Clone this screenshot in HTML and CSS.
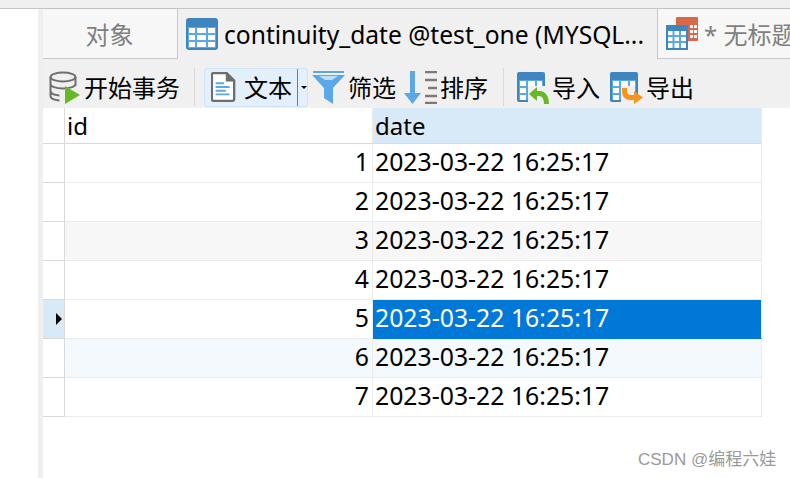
FILE: index.html
```html
<!DOCTYPE html>
<html lang="zh">
<head>
<meta charset="utf-8">
<title>continuity_date</title>
<link rel="stylesheet" href="styles.css">
</head>
<body>
<div class="topstrip"></div>
<div class="shell">
  <div class="gutter"></div>
  <div class="main">
    <div class="tabs">
      <div class="tab tab-objects">对象</div>
      <div class="tab tab-active">
        <svg class="tabicon" width="32" height="32" viewBox="0 0 32 32"><rect width="32" height="32" rx="3" fill="#3f86c1"/><rect x="2" y="9" width="28" height="21" fill="#5aa8e8"/><g fill="#fff"><rect x="3" y="10" width="6" height="5"/><rect x="11" y="10" width="9" height="5"/><rect x="22" y="10" width="7" height="5"/><rect x="3" y="17" width="6" height="5"/><rect x="11" y="17" width="9" height="5"/><rect x="22" y="17" width="7" height="5"/><rect x="3" y="24" width="6" height="5"/><rect x="11" y="24" width="9" height="5"/><rect x="22" y="24" width="7" height="5"/></g></svg>
        <span class="tabtext">continuity_date @test_one (MYSQL...</span>
      </div>
      <div class="tab tab-query">
        <svg class="queryicon" width="33" height="33" viewBox="0 0 33 33"><rect x="10" width="22" height="24" rx="1" fill="#d9674a"/><g fill="#fff"><rect x="24" y="8" width="3" height="3"/><rect x="28" y="8" width="3" height="3"/><rect x="24" y="13" width="3" height="3"/><rect x="28" y="13" width="3" height="3"/><rect x="24" y="18" width="3" height="3"/><rect x="28" y="18" width="3" height="3"/></g><rect y="8" width="22" height="25" fill="#3f86c1"/><rect x="2" y="14" width="18" height="17" fill="#fff"/><path d="M2 19h18M2 25h18M7.500 14v17M14 14v17" stroke="#5aa8e8" stroke-width="2" fill="none"/></svg>
        <span class="querytext">* 无标题</span>
      </div>
    </div>
    <div class="toolbar">
      <div class="tool tool-begin">
        <svg width="31" height="33" viewBox="0 0 31 33"><g fill="none" stroke="#6e6e6e" stroke-width="2"><ellipse cx="14" cy="6" rx="12.500" ry="4.500"/><path d="M1.500 6v19c0 2.500 4 4 9 4.500M26.500 6v9M1.500 13c0 2.500 5 4.500 12.500 4.500s12.500-2 12.500-4.500M1.500 20c0 2.500 4 4 9 4.400"/></g><path d="M16 15l15 9-15 9z" fill="#67b826"/></svg>
        <span>开始事务</span>
      </div>
      <div class="sep sep-a"></div>
      <div class="textbtn">
        <svg width="27" height="32" viewBox="0 0 27 32"><path d="M2 1h15l8 8v20a2 2 0 0 1-2 2H3a2 2 0 0 1-2-2V2z" fill="#fff" stroke="#6e6e6e" stroke-width="2.500"/><path d="M16 0l10 10h-10z" fill="#6e6e6e"/><path d="M5 12h9M5 16h15M5 20h11M5 24h15" stroke="#5aa8e8" stroke-width="2"/></svg>
        <span class="textlabel">文本</span>
        <div class="btndiv"></div>
        <div class="caret"></div>
      </div>
      <div class="tool tool-filter">
        <svg width="33" height="33" viewBox="0 0 33 33"><path d="M1 0h31v2H1z" fill="#5aa8e8"/><path d="M0 4h33L21 17v16l-9-6V17z" fill="#5aa8e8"/><path d="M7 5h19l-6 4h-7z" fill="#bfe0f8"/></svg>
        <span>筛选</span>
      </div>
      <div class="tool tool-sort">
        <svg width="33" height="33" viewBox="0 0 33 33"><path d="M6 0h5v22h6L8.500 33 0 22h6z" fill="#5aa8e8"/><path d="M21 1h12M21 9h12M24 17h9M21 25h12M21 32h12" stroke="#7a7a7a" stroke-width="2.500"/></svg>
        <span>排序</span>
      </div>
      <div class="sep sep-b"></div>
      <div class="tool tool-import">
        <svg width="33" height="33" viewBox="0 0 33 33"><rect y="1" width="28" height="30" rx="2" fill="#3f86c1"/><rect x="2" y="9" width="24" height="20" fill="#5aa8e8"/><g fill="#fff"><rect x="3" y="10" width="6" height="5"/><rect x="11" y="10" width="7" height="5"/><rect x="20" y="10" width="5" height="5"/><rect x="3" y="17" width="6" height="5"/><rect x="3" y="24" width="6" height="5"/></g><path d="M11 15h22v18H11z" fill="#f0f0f0"/><path d="M12 23l8-7v4h3c5 0 9 5 9 13h-5c0-5-2-8-5-8h-2v5z" fill="#67b826"/></svg>
        <span>导入</span>
      </div>
      <div class="tool tool-export">
        <svg width="33" height="33" viewBox="0 0 33 33"><rect y="1" width="28" height="30" rx="2" fill="#3f86c1"/><rect x="2" y="9" width="24" height="20" fill="#5aa8e8"/><g fill="#fff"><rect x="3" y="10" width="6" height="5"/><rect x="11" y="10" width="7" height="5"/><rect x="20" y="10" width="5" height="5"/><rect x="3" y="17" width="6" height="5"/><rect x="3" y="24" width="6" height="5"/></g><path d="M11 15h14v18H11z" fill="#f0f0f0"/><path d="M12 17h5v3c0 3 2 4 5 4h2v-4l9 6.500-9 6.500v-4h-3c-6 0-9-3-9-9z" fill="#f7941d"/></svg>
        <span>导出</span>
      </div>
    </div>
    <div class="grid">
      <div class="row head"><div class="ind"></div><div class="cell id">id</div><div class="cell date datehead">date</div></div>
      <div class="row"><div class="ind"></div><div class="cell id num">1</div><div class="cell date">2023-03-22 16:25:17</div></div>
      <div class="row"><div class="ind"></div><div class="cell id num">2</div><div class="cell date">2023-03-22 16:25:17</div></div>
      <div class="row alt"><div class="ind"></div><div class="cell id num">3</div><div class="cell date">2023-03-22 16:25:17</div></div>
      <div class="row"><div class="ind"></div><div class="cell id num">4</div><div class="cell date">2023-03-22 16:25:17</div></div>
      <div class="row current"><div class="ind ind-current"><div class="pointer"></div></div><div class="cell id num">5</div><div class="cell date selected">2023-03-22 16:25:17</div></div>
      <div class="row tint"><div class="ind"></div><div class="cell id num">6</div><div class="cell date">2023-03-22 16:25:17</div></div>
      <div class="row"><div class="ind"></div><div class="cell id num">7</div><div class="cell date">2023-03-22 16:25:17</div></div>
    </div>
  </div>
</div>
<div class="watermark">CSDN @编程六娃</div>
</body>
</html>
```

FILE: styles.css
```css
* { box-sizing: border-box; }
html, body { margin: 0; height: 100%; }
body {
  position: relative;
  width: 790px;
  height: 478px;
  overflow: hidden;
  background: #fff;
  color: #000;
  font-family: "Noto Sans", "Noto Sans CJK SC", sans-serif;
  font-size: 24px;
}
.topstrip { height: 9px; background: #f0f0f0; border-bottom: 1px solid #c4c4c4; }
.shell { display: flex; height: 469px; padding-left: 38px; }
.gutter { width: 5px; background: #efefef; flex: none; }
.main { flex: 1; min-width: 0; }

.tabs { display: flex; height: 50px; background: #f0f0f0; overflow: hidden; }
.tab { display: flex; align-items: center; flex: none; font-size: 24px; }
.tab-objects {
  width: 135px; padding-right: 1px; justify-content: center; color: #7f7f7f;
  background: #f7f7f7; border-right: 1px solid #c8c8c8; border-bottom: 1px solid #c8c8c8;
  font-family: "Noto Sans CJK SC", sans-serif;
}
.tab-active { width: 479px; padding-left: 8px; }
.tabicon { flex: none; }
.tabtext { margin-left: 6px; font-size: 24.600px; white-space: nowrap; }
.tab-query {
  width: 133px; padding-left: 8px; background: #f7f7f7; color: #7f7f7f;
  border-left: 1px solid #c8c8c8; border-bottom: 1px solid #c8c8c8;
}
.queryicon { flex: none; }
.querytext { margin-left: 5px; white-space: nowrap; font-family: "Noto Sans", "Noto Sans CJK SC", sans-serif; }

.toolbar {
  display: flex; align-items: center; height: 49px; background: #f0f0f0;
  font-family: "Noto Sans CJK SC", sans-serif; font-size: 24px; line-height: 30px;
  padding: 7px 0 0 6px;
}
.tool { display: flex; align-items: center; flex: none; }
.tool span { margin-left: 4px; white-space: nowrap; }
.tool-begin { width: 145px; }
.sep { width: 1px; height: 38px; background: #d9d9d9; flex: none; }
.textbtn {
  display: flex; align-items: center; flex: none;
  width: 104px; height: 39px; margin-left: 9px; padding-left: 6px;
  background: #e3f0fb; border: 1px solid #cfe4f7; border-radius: 3px;
}
.textlabel { margin-left: 8px; white-space: nowrap; flex: none; }
.btndiv { width: 1px; height: 37px; margin-left: 5px; background: #7a7a7a; flex: none; }
.caret { width: 0; height: 0; margin-left: 3px; border: 3px solid transparent; border-top: 3px solid #000; border-bottom: 0; flex: none; }
.tool-filter { margin-left: 4px; }
.tool-filter span { margin-left: 3px; }
.tool-sort { margin-left: 8px; }
.tool-sort span { margin-left: 3px; }
.sep-b { margin-left: 15px; }
.tool-import { margin-left: 13px; }
.tool-import span { margin-left: 2px; }
.tool-export span { margin-left: 3px; }
.tool-export { margin-left: 10px; }

.grid { width: 719px; }
.row { display: grid; grid-template-columns: 22px 308px 389px; height: 39px; background: #fff; }
.head { height: 36px; }
.ind { border-right: 1px solid #dadada; border-bottom: 1px solid #dadada; }
.ind-current { background: #d8e9f7; display: flex; align-items: center; justify-content: flex-end; padding-right: 2px; }
.pointer { width: 0; height: 0; border: 6px solid transparent; border-left: 6px solid #000; border-right: 0; }
.cell {
  display: flex; align-items: center; padding: 0 2px 4px;
  border-bottom: 1px solid #ebebeb; border-right: 1px solid #ebebeb;
  font-size: 24.800px; white-space: nowrap;
}
.head .cell { font-size: 24px; padding-bottom: 0; border-bottom-color: #dadada; }
.head .ind { border-bottom-color: #dadada; }
.num { justify-content: flex-end; padding-right: 3px; }
.datehead { background: #d8e9f7; }
.alt { background: #f7f7f7; }
.tint { background: #f4f9fd; }
.selected { background: #0078d7; color: #fff; border-bottom-color: #0078d7; }
.tint .ind, .alt .ind { background: #fff; }

.watermark {
  position: absolute; left: 638px; top: 449px;
  font-family: "Liberation Sans", "Noto Sans CJK SC", sans-serif;
  font-size: 17px; line-height: 22px; color: #9a9a9a; white-space: nowrap;
}
```
